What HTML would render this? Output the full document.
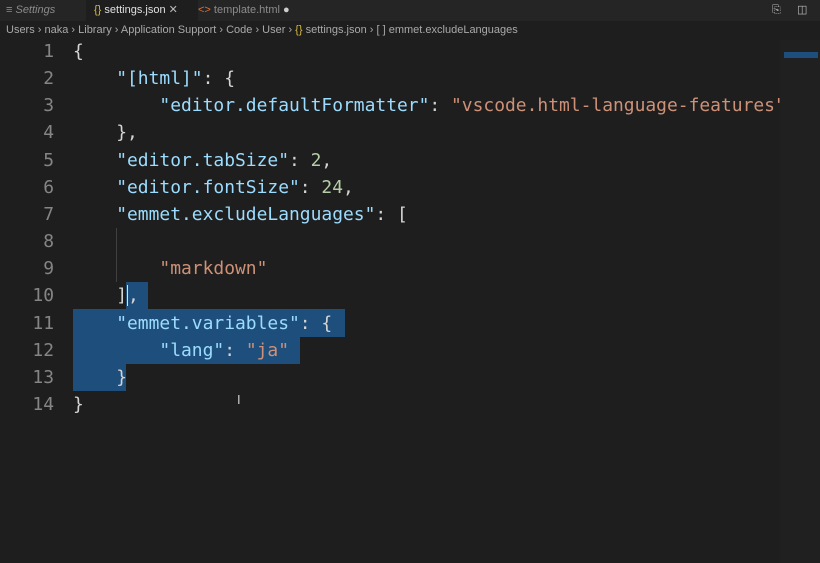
<!DOCTYPE html>
<html><head><style>
body{margin:0;width:820px;height:563px;background:#1e1e1e;overflow:hidden;font-family:"Liberation Sans",sans-serif;position:relative}
.tabs{position:absolute;top:0;left:0;width:820px;height:21px;background:#252526}
.tab{position:absolute;top:0;height:21px;font-size:11px;line-height:21px;color:#8b8b8b}
.bc{position:absolute;top:21px;left:6px;font-size:11px;color:#a9a9a9;line-height:18px;white-space:nowrap}
.code{position:absolute;left:0;top:38px;font-family:"DejaVu Sans Mono",monospace;font-size:17.95px}
.ln{position:absolute;left:0;width:54px;text-align:right;color:#858585;height:27.15px;line-height:27.15px}
.l{position:absolute;left:73px;white-space:pre;color:#d4d4d4;height:27.15px;line-height:27.15px}
.k{color:#9cdcfe}.s{color:#ce9178}.n{color:#b5cea8}
.sel{position:absolute;background:#1e4f7c}
.g{position:absolute;width:1px;background:#404040}
</style></head><body>
<div class="tabs">
<div class="tab" style="left:0;width:88px;padding-left:6px;font-style:italic">≡ Settings</div>
<div class="tab" style="left:86px;width:104px;background:#1e1e1e;color:#e0e0e0;padding-left:8px"><span style="color:#d7ba43">{}</span> settings.json <span style="color:#bbb">✕</span></div>
<div class="tab" style="left:192px;width:106px;padding-left:6px"><span style="color:#d7743a">&lt;&gt;</span> template.html <span style="color:#ccc">●</span></div>
<div class="tab" style="left:772px;color:#bbb">⎘</div>
<div class="tab" style="left:797px;color:#bbb">◫</div>
</div>
<div class="bc">Users › naka › Library › Application Support › Code › User › <span style="color:#d7ba43">{}</span> settings.json › [ ] emmet.excludeLanguages</div>
<div class="code">
<div class="sel" style="left:126px;top:244px;width:22px;height:28px"></div>
<div class="sel" style="left:73px;top:271px;width:272px;height:28px"></div>
<div class="sel" style="left:73px;top:298px;width:227px;height:28px"></div>
<div class="sel" style="left:73px;top:325px;width:53px;height:28px"></div>
<div class="g" style="left:116px;top:190px;height:54px"></div>
<div class="ln" style="top:0">1</div><div class="l" style="top:0">{</div>
<div class="ln" style="top:27.15px">2</div><div class="l" style="top:27.15px">    <span class="k">"[html]"</span>: {</div>
<div class="ln" style="top:54.3px">3</div><div class="l" style="top:54.3px">        <span class="k">"editor.defaultFormatter"</span>: <span class="s">"vscode.html-language-features"</span></div>
<div class="ln" style="top:81.45px">4</div><div class="l" style="top:81.45px">    },</div>
<div class="ln" style="top:108.6px">5</div><div class="l" style="top:108.6px">    <span class="k">"editor.tabSize"</span>: <span class="n">2</span>,</div>
<div class="ln" style="top:135.75px">6</div><div class="l" style="top:135.75px">    <span class="k">"editor.fontSize"</span>: <span class="n">24</span>,</div>
<div class="ln" style="top:162.9px">7</div><div class="l" style="top:162.9px">    <span class="k">"emmet.excludeLanguages"</span>: [</div>
<div class="ln" style="top:190.05px">8</div><div class="l" style="top:190.05px"></div>
<div class="ln" style="top:217.2px">9</div><div class="l" style="top:217.2px">        <span class="s">"markdown"</span></div>
<div class="ln" style="top:244.35px">10</div><div class="l" style="top:244.35px">    ]<span style="border-left:1px solid #ddd"></span>,</div>
<div class="ln" style="top:271.5px">11</div><div class="l" style="top:271.5px">    <span class="k">"emmet.variables"</span>: {</div>
<div class="ln" style="top:298.65px">12</div><div class="l" style="top:298.65px">        <span class="k">"lang"</span>: <span class="s">"ja"</span></div>
<div class="ln" style="top:325.8px">13</div><div class="l" style="top:325.8px">    }</div>
<div class="ln" style="top:352.95px">14</div><div class="l" style="top:352.95px">}</div>
</div>
<div style="position:absolute;left:780px;top:40px;width:40px;height:523px;background:#202020"></div>
<div style="position:absolute;left:784px;top:52px;width:34px;height:6px;background:#1e4f7c"></div>
<div style="position:absolute;left:237px;top:392px;color:#ccc;font-size:13px">I</div>
</body></html>
